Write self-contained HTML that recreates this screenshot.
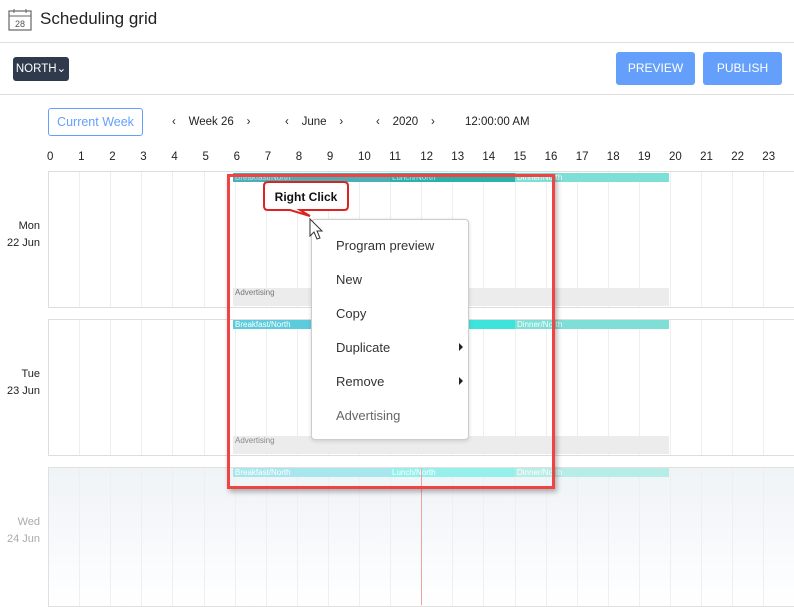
<!DOCTYPE html><html><head><style>
body{margin:0;width:794px;height:605px;overflow:hidden;background:#fff;font-family:"Liberation Sans",sans-serif;position:relative;color:#222}
.a{position:absolute}
.hl{position:absolute;font-size:11.5px;color:#222}
.row{position:absolute;left:48px;width:746px;border:1px solid #ddd;border-right:none;box-sizing:border-box}
.vl{position:absolute;top:0;bottom:0;width:1px;background:#eee}
.bar{position:absolute;height:9px;font-size:8px;color:#fff;line-height:9px;padding-left:2px;box-sizing:border-box;overflow:hidden;white-space:nowrap}
.mi{position:absolute;left:24px;font-size:13px;color:#333}
.ar{position:absolute;right:5px;width:0;height:0;border-left:4px solid #222;border-top:4px solid transparent;border-bottom:4px solid transparent}
.day{position:absolute;left:0;width:40px;font-size:11px;text-align:right;line-height:17px;white-space:nowrap}
</style></head><body>
<svg class="a" style="left:8px;top:8px" width="25" height="24" viewBox="0 0 25 24"><rect x="1" y="3" width="22" height="19" fill="none" stroke="#666" stroke-width="1.2"/><line x1="1" y1="8" x2="23" y2="8" stroke="#666"/><line x1="6" y1="1" x2="6" y2="5" stroke="#666"/><line x1="18" y1="1" x2="18" y2="5" stroke="#666"/><text x="12" y="19" font-size="9" text-anchor="middle" fill="#555" font-family="Liberation Sans">28</text></svg>
<div class="a" style="left:40px;top:9px;font-size:17px;color:#222">Scheduling grid</div>
<div class="a" style="left:0;top:42px;width:794px;height:1px;background:#ddd"></div>
<div class="a" style="left:13px;top:57px;width:56px;height:24px;background:#2f3a4c;border-radius:3px;color:#fff;font-size:11.5px;line-height:24px;text-align:center">NORTH&#8964;</div>
<div class="a" style="left:616px;top:52px;width:79px;height:33px;background:#64a0fb;border-radius:3px;color:#fff;font-size:12px;line-height:33px;text-align:center">PREVIEW</div>
<div class="a" style="left:703px;top:52px;width:79px;height:33px;background:#64a0fb;border-radius:3px;color:#fff;font-size:12px;line-height:33px;text-align:center">PUBLISH</div>
<div class="a" style="left:0;top:94px;width:794px;height:1px;background:#ddd"></div>
<div class="a" style="left:48px;top:108px;width:95px;height:28px;border:1px solid #64a0fb;border-radius:3px;box-sizing:border-box;color:#64a0fb;font-size:12.5px;line-height:26px;text-align:center">Current Week</div>
<div class="a" style="top:116px;left:172px;font-size:11.5px">‹&nbsp;&nbsp;&nbsp;&nbsp;Week 26&nbsp;&nbsp;&nbsp;&nbsp;›</div>
<div class="a" style="top:116px;left:285px;font-size:11.5px">‹&nbsp;&nbsp;&nbsp;&nbsp;June&nbsp;&nbsp;&nbsp;&nbsp;›</div>
<div class="a" style="top:116px;left:376px;font-size:11.5px">‹&nbsp;&nbsp;&nbsp;&nbsp;2020&nbsp;&nbsp;&nbsp;&nbsp;›</div>
<div class="a" style="top:116px;left:465px;font-size:11.5px">12:00:00 AM</div>
<div id="hrs"></div>
<div class="row" id="r1" style="top:171px;height:137px"></div>
<div class="row" id="r2" style="top:319px;height:137px"></div>
<div class="row" id="r3" style="top:467px;height:140px;background:linear-gradient(#eef3f7,#fff);opacity:.9"></div>
<div class="day" style="top:218px">Mon<br>22 Jun</div>
<div class="day" style="top:366px">Tue<br>23 Jun</div>
<div class="day" style="top:514px;color:#aaa">Wed<br>24 Jun</div>
<div class="bar" style="left:233px;top:173px;width:157px;background:#4cafb6;color:#bde">Breakfast/North</div>
<div class="bar" style="left:390px;top:173px;width:125px;background:#2bb2a8;color:#bde">Lunch/North</div>
<div class="bar" style="left:515px;top:173px;width:154px;background:#7ddfd5">Dinner/North</div>
<div class="bar" style="left:233px;top:288px;width:436px;height:18px;background:#ececec;color:#777;line-height:10px">Advertising</div>
<div class="bar" style="left:233px;top:320px;width:157px;background:#5ccbdc">Breakfast/North</div>
<div class="bar" style="left:390px;top:320px;width:125px;background:#3de4dc">Lunch/North</div>
<div class="bar" style="left:515px;top:320px;width:154px;background:#7ddfd5">Dinner/North</div>
<div class="bar" style="left:233px;top:436px;width:436px;height:18px;background:#ececec;color:#888;line-height:10px">Advertising</div>
<div class="bar" style="left:233px;top:468px;width:157px;background:#a8e6ee">Breakfast/North</div>
<div class="bar" style="left:390px;top:468px;width:125px;background:#95f0ec">Lunch/North</div>
<div class="bar" style="left:515px;top:468px;width:154px;background:#b6ede6">Dinner/North</div>
<div class="a" style="left:421px;top:468px;width:1px;height:137px;background:#f3a0a0"></div>
<div class="a" style="left:227px;top:174px;width:328px;height:315px;border:3px solid #f04444;box-sizing:border-box;box-shadow:2px 3px 5px rgba(0,0,0,.3)"></div>
<div class="a" style="left:311px;top:219px;width:158px;height:221px;background:#fff;border:1px solid #ccc;border-radius:4px;box-sizing:border-box;box-shadow:0 1px 4px rgba(0,0,0,.15)">
<div class="mi" style="top:18px">Program preview</div>
<div class="mi" style="top:52px">New</div>
<div class="mi" style="top:86px">Copy</div>
<div class="mi" style="top:120px">Duplicate</div><div class="ar" style="top:123px"></div>
<div class="mi" style="top:154px">Remove</div><div class="ar" style="top:157px"></div>
<div class="mi" style="top:188px;color:#666">Advertising</div>
</div>
<svg class="a" style="left:262px;top:180px" width="90" height="40" viewBox="0 0 90 40"><path d="M6 2H82Q86 2 86 6V26Q86 30 82 30H38L48 36L28 30H6Q2 30 2 26V6Q2 2 6 2Z" fill="#fff" stroke="#d22" stroke-width="2"/><text x="44" y="21" font-size="12" font-weight="bold" text-anchor="middle" font-family="Liberation Sans" fill="#111">Right Click</text></svg>
<svg class="a" style="left:309px;top:218px" width="18" height="26" viewBox="0 0 18 26"><path d="M1 1V18L5 14L8 21L11 20L8 13H13Z" fill="#fff" stroke="#333" stroke-width="1"/></svg>
<script>
var h='';for(var i=0;i<24;i++){var x=48+i*31.1;h+='<div class="hl" style="left:'+(x-1)+'px;top:151px">'+i+'</div>';}
document.getElementById('hrs').innerHTML=h;
['r1','r2','r3'].forEach(function(id){var s='';for(var i=1;i<24;i++)s+='<div class="vl" style="left:'+(i*31.1-1)+'px"></div>';document.getElementById(id).innerHTML=s;});
</script>
</body></html>
